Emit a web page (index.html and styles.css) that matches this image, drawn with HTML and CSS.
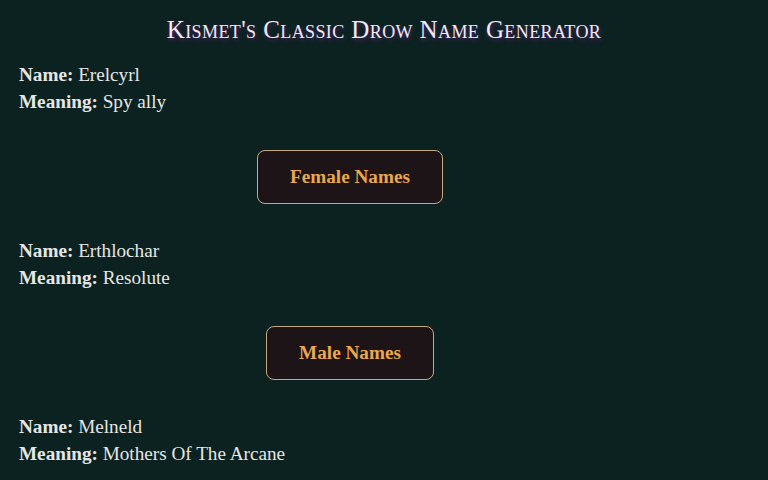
FILE: index.html
```html
<!DOCTYPE html>
<html lang="en">
<head>
  <meta charset="UTF-8">
  <meta name="viewport" content="width=device-width, initial-scale=1.0">
  <title>Kismet's Classic Drow Name Generator</title>
  <link rel="stylesheet" href="styles.css">
</head>
<body>
  <h1>Kismet's Classic Drow Name Generator</h1>
  <div class="container">
    <div class="result">
      <p><strong>Name:</strong> Erelcyrl</p>
      <p><strong>Meaning:</strong> Spy ally</p>
    </div>
    <div class="actions">
      <button>Female Names</button>
    </div>

    <div class="result">
      <p><strong>Name:</strong> Erthlochar</p>
      <p><strong>Meaning:</strong> Resolute</p>
    </div>
    <div class="actions">
      <button>Male Names</button>
    </div>

    <div class="result">
      <p><strong>Name:</strong> Melneld</p>
      <p><strong>Meaning:</strong> Mothers Of The Arcane</p>
    </div>
  </div>
</body>
</html>
```

FILE: styles.css
```css
body {
  margin: 0;
  background-color: #0b2220;
  color: #e6e6e6;
  font-family: "Liberation Serif", "Times New Roman", serif;
  font-size: 19.2px;
}
h1 {
  margin: 14px 0 0;
  text-align: center;
  font-size: 25px;
  font-weight: normal;
  font-variant: small-caps;
  letter-spacing: 0.4px;
  color: #f0eaf4;
  text-shadow: 1px 2px 4px #5a2070;
  line-height: 32px;
}
.container {
  width: 662px;
  margin-left: 19px;
}
.result {
  margin-top: 16px;
}
.result p {
  margin: 0;
  line-height: 26.6px;
}
.actions {
  display: flex;
  justify-content: center;
  margin: 35px 0 34px;
}
button {
  padding: 0 32px;
  height: 54px;
  background-color: #1c1416;
  color: #e9a84f;
  border: 1px solid #c7a77c;
  border-radius: 8px;
  font-family: "Liberation Serif", "Times New Roman", serif;
  font-size: 19.2px;
  font-weight: bold;
  cursor: pointer;
}
```
